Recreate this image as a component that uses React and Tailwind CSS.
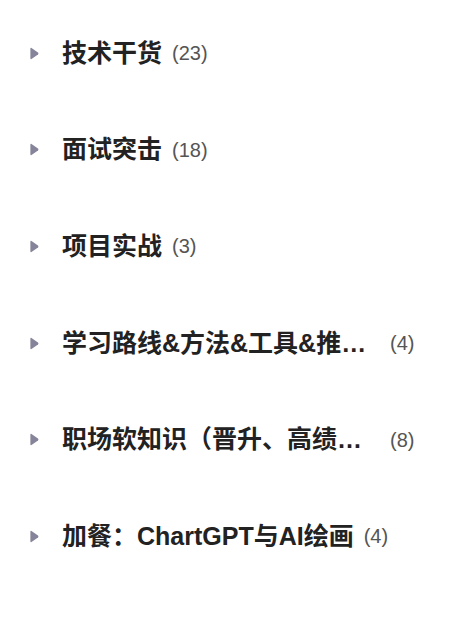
export default function App() {
  const items = [
    { t: "技术干货", c: "(23)" },
    { t: "面试突击", c: "(18)" },
    { t: "项目实战", c: "(3)" },
    { t: "学习路线&方法&工具&推荐书籍", c: "(4)" },
    { t: "职场软知识（晋升、高绩效、沟通）", c: "(8)" },
    { t: "加餐：ChartGPT与AI绘画", c: "(4)" },
  ];
  return (
    <div className="w-[474px] h-[626px] bg-white pt-[5px]" style={{ fontFamily: '"Liberation Sans", "Noto Sans CJK SC", sans-serif' }}>
      {items.map((it, i) => (
        <div key={i} className="h-[96.6px] flex items-center pl-[30px]">
          <svg width="9" height="13" viewBox="0 0 9 13" className="shrink-0">
            <path d="M1.5 0.9 L8 5.5 Q8.9 6.5 8 7.5 L1.5 12.1 Q0.4 12.6 0.4 11.2 L0.4 1.8 Q0.4 0.4 1.5 0.9 Z" fill="#85849a" />
          </svg>
          <span className="ml-[23px] text-[25px] font-bold text-[#222222] truncate max-w-[318px] leading-[1.4]">{it.t}</span>
          <span className="ml-[10px] text-[20px] text-[#555555] leading-[1.4] shrink-0">{it.c}</span>
        </div>
      ))}
    </div>
  );
}
